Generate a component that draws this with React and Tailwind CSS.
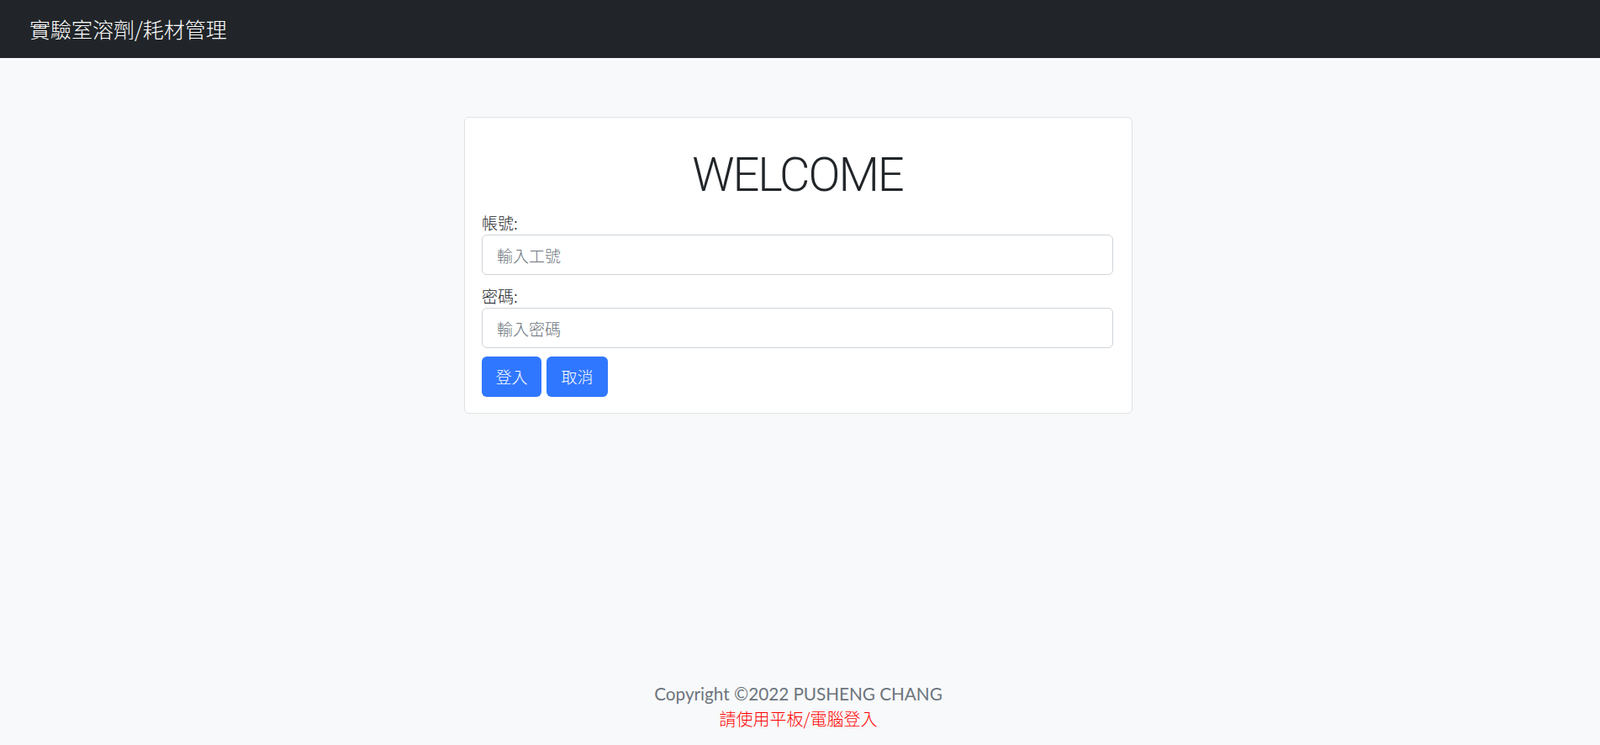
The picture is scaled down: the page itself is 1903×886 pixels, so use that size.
export default function App() {
  return (
    <div className="min-h-screen flex flex-col bg-[#f8f9fa] font-['Lato','Noto_Sans_CJK_TC',sans-serif] text-[#212529]">
      <nav className="h-[69px] bg-[#212529] flex items-center px-[35px]">
        <span className="text-white text-[25px] font-light font-['Noto_Sans_CJK_TC',sans-serif]">
          實驗室溶劑/耗材管理
        </span>
      </nav>

      <main className="flex-1 pt-[70px] pr-[4px]">
        <div className="mx-auto w-[795px] bg-white border border-[#dfe2e6] rounded-[6px] pt-[19px] pb-[19px] pl-[20px] pr-[22px]">
          <h1 className="h-[91px] pt-[21px] leading-none text-center text-[56px] font-light tracking-[-2px] text-[#212529] font-['Roboto',sans-serif]">
            WELCOME
          </h1>

          <label className="block h-[29px] leading-[29px] text-[19px] font-light font-['Noto_Sans_CJK_TC',sans-serif]">
            帳號:
          </label>
          <input
            type="text"
            placeholder="輸入工號"
            className="block w-full h-[48px] px-[17px] border border-[#ced4da] rounded-[6px] text-[19px] font-light font-['Noto_Sans_CJK_TC',sans-serif] placeholder:text-[#6c757d] focus:outline-none"
          />

          <label className="block mt-[10px] h-[29px] leading-[29px] text-[19px] font-light font-['Noto_Sans_CJK_TC',sans-serif]">
            密碼:
          </label>
          <input
            type="password"
            placeholder="輸入密碼"
            className="block w-full h-[48px] px-[17px] border border-[#ced4da] rounded-[6px] text-[19px] font-light font-['Noto_Sans_CJK_TC',sans-serif] placeholder:text-[#6c757d] focus:outline-none"
          />

          <div className="flex gap-[6px] mt-[10px]">
            <button className="h-[48px] w-[71px] bg-[#3077ff] text-white rounded-[6px] text-[19px] font-light font-['Noto_Sans_CJK_TC',sans-serif]">
              登入
            </button>
            <button className="h-[48px] w-[73px] bg-[#3077ff] text-white rounded-[6px] text-[19px] font-light font-['Noto_Sans_CJK_TC',sans-serif]">
              取消
            </button>
          </div>
        </div>
      </main>

      <footer className="pb-[16px] pr-[4px] text-center">
        <p className="h-[30px] leading-[30px] text-[20.7px] text-[#6c757d]">
          Copyright ©2022 PUSHENG CHANG
        </p>
        <p className="h-[30px] leading-[30px] text-[20px] font-light text-[#ff0000] font-['Noto_Sans_CJK_TC',sans-serif]">
          請使用平板/電腦登入
        </p>
      </footer>
    </div>
  );
}
